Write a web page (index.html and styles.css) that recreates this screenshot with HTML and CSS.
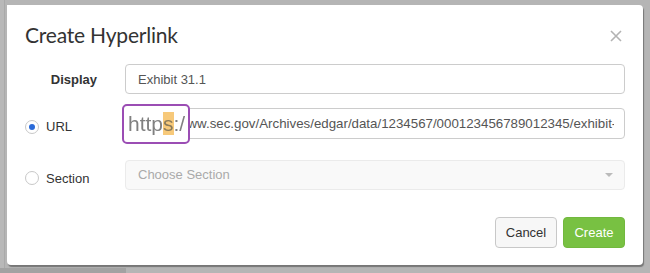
FILE: index.html
```html
<!DOCTYPE html>
<html lang="en">
<head>
  <meta charset="UTF-8">
  <title>Create Hyperlink</title>
  <link rel="stylesheet" href="styles.css">
</head>
<body>

<div class="backdrop">
  <div class="modal">

    <!-- Header -->
    <div class="modal-header">
      <h2>Create Hyperlink</h2>
      <button class="close" aria-label="Close">
        <svg width="12" height="12" viewBox="0 0 12 12">
          <path d="M1 1 L11 11 M11 1 L1 11" stroke="#b3b3b3" stroke-width="1.6" fill="none"/>
        </svg>
      </button>
    </div>

    <!-- Body -->
    <div class="modal-body">
      <div class="form-row row-display">
        <label class="control-label" for="display">Display</label>
        <input type="text" id="display" class="form-control" value="Exhibit 31.1">
      </div>

      <div class="form-row row-url">
        <label class="radio-label">
          <span class="radio checked"></span>
          URL
        </label>
        <div class="field">
          <input type="text" class="form-control url-input" value="https://www.sec.gov/Archives/edgar/data/1234567/000123456789012345/exhibit-i">
          <div class="magnify"><span class="zoomed">http<span class="hl">s</span>:/</span></div>
        </div>
      </div>

      <div class="form-row row-section">
        <label class="radio-label">
          <span class="radio"></span>
          Section
        </label>
        <div class="form-control select-disabled">
          Choose Section
          <span class="caret"></span>
        </div>
      </div>
    </div>

    <!-- Footer -->
    <div class="modal-footer">
      <button class="btn btn-default">Cancel</button>
      <button class="btn btn-success">Create</button>
    </div>

  </div>
</div>

</body>
</html>
```

FILE: styles.css
```css
body {
  margin: 0;
  font-family: 'Liberation Sans', Arial, sans-serif;
  background: #b3b3b3;
  height: 273px;
  overflow: hidden;
}

.backdrop {
  padding: 5px 0 0 7px;
  height: 273px;
  box-sizing: border-box;
  background:
    linear-gradient(#a2a2a2, #a2a2a2) 0 268px / 126px 5px no-repeat,
    linear-gradient(to right, #b8b8b8 0, #b8b8b8 4px, #a9a9a9 4px, #a9a9a9 5px, #b5b5b5 5px);
}

.modal {
  width: 636px;
  height: 260px;
  background: #fff;
  border-radius: 0 4px 4px 4px;
  box-shadow: 1px 2px 1px rgba(0, 0, 0, 0.35);
  box-sizing: border-box;
  padding: 0 18px;
}

.modal-header {
  display: flex;
  justify-content: space-between;
  align-items: flex-start;
  padding-top: 17px;
}

.modal-header h2 {
  margin: 0;
  font-family: Lato, sans-serif;
  font-weight: 400;
  font-size: 21px;
  letter-spacing: -0.2px;
  line-height: 26px;
  color: #333;
}

.close {
  background: none;
  border: none;
  padding: 0;
  margin: 8px 3px 0 0;
  cursor: pointer;
  line-height: 0;
}

.modal-body {
  padding-top: 16px;
}

.form-row {
  display: flex;
  align-items: center;
}

.row-url {
  margin-top: 14px;
}

.row-section {
  margin-top: 21px;
}

.control-label {
  width: 100px;
  box-sizing: border-box;
  padding-right: 28px;
  text-align: right;
  font-weight: bold;
  font-size: 13px;
  color: #333;
}

.radio-label {
  width: 100px;
  display: flex;
  align-items: center;
  gap: 7px;
  padding-top: 6px;
  font-size: 13px;
  color: #333;
}

.radio {
  width: 12px;
  height: 12px;
  border: 1px solid #c8c8c8;
  border-radius: 50%;
  box-sizing: content-box;
  display: inline-block;
  position: relative;
  background: #fff;
}

.radio.checked::after {
  content: "";
  position: absolute;
  left: 3px;
  top: 3px;
  width: 6px;
  height: 6px;
  border-radius: 50%;
  background: #2a6ad8;
}

.form-control {
  width: 500px;
  height: 30px;
  box-sizing: border-box;
  padding: 6px 12px;
  border: 1px solid #ccc;
  border-radius: 4px;
  font-family: 'Liberation Sans', Arial, sans-serif;
  font-size: 13px;
  color: #555;
  background: #fff;
}

.url-input {
  height: 31px;
  font-size: 13.3px;
  padding-right: 10px;
}

.field {
  position: relative;
}

.magnify {
  position: absolute;
  left: -3px;
  top: -4px;
  width: 68px;
  height: 40px;
  box-sizing: border-box;
  border: 2px solid #9b4db4;
  border-radius: 5px;
  background: #fff;
  padding-left: 4px;
  font-size: 21px;
  line-height: 36px;
  white-space: nowrap;
  overflow: hidden;
}

.zoomed {
  color: #808080;
  filter: blur(0.5px);
  display: inline-block;
}

.zoomed .hl {
  background: #f7c97a;
  color: #8a7a5a;
}

.select-disabled {
  position: relative;
  background: #f9f9f9;
  border-color: #ebebeb;
  color: #aaa;
  line-height: 16px;
}

.caret {
  position: absolute;
  right: 11px;
  top: 12px;
  width: 0;
  height: 0;
  border-left: 4px solid transparent;
  border-right: 4px solid transparent;
  border-top: 4px solid #bbb;
}

.modal-footer {
  display: flex;
  justify-content: flex-end;
  gap: 6px;
  margin-top: 27px;
}

.btn {
  height: 31px;
  width: 62px;
  border-radius: 4px;
  font-family: 'Liberation Sans', Arial, sans-serif;
  font-size: 13px;
  cursor: pointer;
  padding: 0;
}

.btn-default {
  background: #f7f7f7;
  border: 1px solid #c8c8c8;
  color: #333;
}

.btn-success {
  background: #78c142;
  border: 1px solid #72b83e;
  color: #fff;
}
```
